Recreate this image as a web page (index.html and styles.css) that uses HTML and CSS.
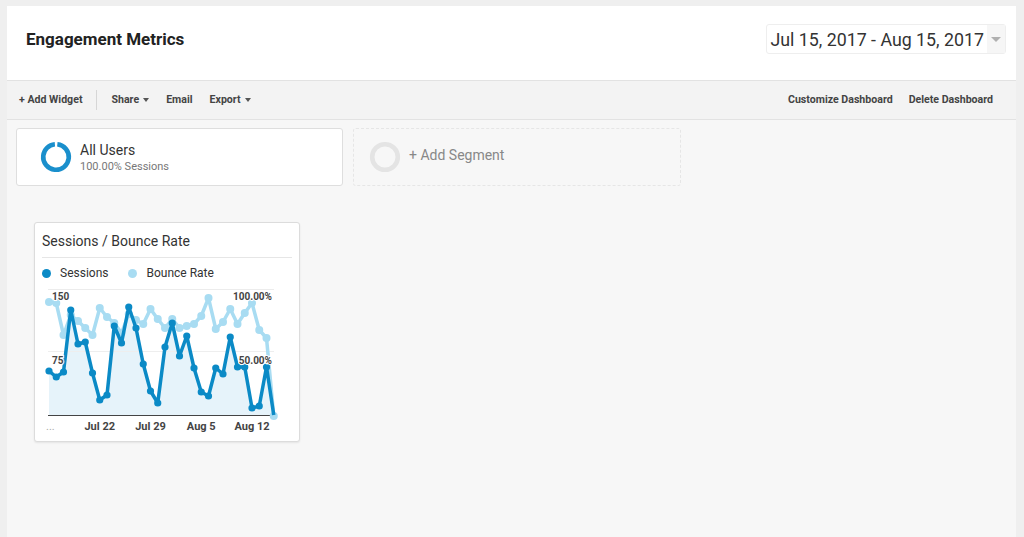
FILE: index.html
```html
<!DOCTYPE html>
<html lang="en">
<head>
    <meta charset="UTF-8">
    <title>Engagement Metrics</title>
    <link rel="stylesheet" href="styles.css">
</head>
<body>
<div class="page">
    <!-- Header -->
    <div class="header">
        <h1>Engagement Metrics</h1>
        <div class="date-range">
            <span class="date-text">Jul 15, 2017 - Aug 15, 2017</span>
            <span class="date-arrow"></span>
        </div>
    </div>

    <!-- Toolbar -->
    <div class="toolbar">
        <div class="toolbar-group">
            <span class="tool">+ Add Widget</span>
            <span class="tool-sep"></span>
            <span class="tool">Share <i class="caret"></i></span>
            <span class="tool">Email</span>
            <span class="tool">Export <i class="caret"></i></span>
        </div>
        <div class="toolbar-group right">
            <span class="tool">Customize Dashboard</span>
            <span class="tool">Delete Dashboard</span>
        </div>
    </div>

    <div class="content">
        <!-- Segmenti -->
        <div class="segments">
            <div class="segment">
                <svg class="donut" width="32" height="32" viewBox="0 0 32 32">
                    <circle cx="16" cy="16" r="12.8" fill="none" stroke="#1a8fcc" stroke-width="4.6"
                            stroke-dasharray="77.4 3" transform="rotate(-84 16 16)"/>
                </svg>
                <div class="segment-text">
                    <div class="segment-name">All Users</div>
                    <div class="segment-sub">100.00% Sessions</div>
                </div>
            </div>
            <div class="segment add">
                <svg class="donut" width="32" height="32" viewBox="0 0 32 32">
                    <circle cx="16" cy="16" r="12.8" fill="none" stroke="#e4e4e4" stroke-width="4.6"/>
                </svg>
                <div class="segment-name">+ Add Segment</div>
            </div>
        </div>

        <!-- Widget -->
        <div class="widget">
            <div class="widget-title">Sessions / Bounce Rate</div>
            <div class="legend">
                <span class="legend-item"><i class="dot sessions"></i>Sessions</span>
                <span class="legend-item"><i class="dot bounce"></i>Bounce Rate</span>
            </div>
            <svg class="chart" width="264" height="152" viewBox="35 285 264 152">
                <polygon fill="#e6f3fa" points="49,415 49,371 56.25,377 63.5,372 70.75,310 78,344 85.25,342 92.5,373 99.75,400 107,395 114.25,326 121.5,343 128.75,307 136,328 143.25,364 150.5,391 157.75,403 165,347 172.25,323 179.5,356 186.75,336 194,368 201.25,392 208.5,396 215.75,368 223,374 230.25,337 237.5,367 244.75,367 252,408 259.25,406 266.5,367 273.75,415"/>
                <line x1="48" y1="289.5" x2="274" y2="289.5" stroke="#ececec" stroke-width="1"/>
                <line x1="48" y1="351.5" x2="274" y2="351.5" stroke="#eeeeee" stroke-width="1"/>
                <line x1="48" y1="415.5" x2="274" y2="415.5" stroke="#444" stroke-width="1"/>

                <polyline fill="none" stroke="#a8dcf2" stroke-width="3.5" stroke-linejoin="round" points="49,302 56.25,303 63.5,335 70.75,315 78,321 85.25,328 92.5,335 99.75,308 107,317 114.25,323 121.5,333 128.75,314 136,320 143.25,324 150.5,309 157.75,319 165,328 172.25,319 179.5,328 186.75,326 194,324 201.25,316 208.5,298 215.75,329 223,322 230.25,309 237.5,324 244.75,313 252,303 259.25,330 266.5,338 273.75,416"/>
                <g fill="#a8dcf2" id="bounceDots"></g>

                <polyline fill="none" stroke="#0b8ac6" stroke-width="3.5" stroke-linejoin="round" points="49,371 56.25,377 63.5,372 70.75,310 78,344 85.25,342 92.5,373 99.75,400 107,395 114.25,326 121.5,343 128.75,307 136,328 143.25,364 150.5,391 157.75,403 165,347 172.25,323 179.5,356 186.75,336 194,368 201.25,392 208.5,396 215.75,368 223,374 230.25,337 237.5,367 244.75,367 252,408 259.25,406 266.5,367 273.75,415"/>
                <g fill="#0b8ac6" id="sessionDots"></g>

                <g class="axis-label">
                    <text x="52" y="300">150</text>
                    <text x="52" y="364">75</text>
                    <text x="272" y="300" text-anchor="end">100.00%</text>
                    <text x="272" y="364" text-anchor="end">50.00%</text>
                </g>
                <g class="x-label">
                    <text x="46" y="430" class="muted">...</text>
                    <text x="99.75" y="430" text-anchor="middle">Jul 22</text>
                    <text x="150.5" y="430" text-anchor="middle">Jul 29</text>
                    <text x="201.25" y="430" text-anchor="middle">Aug 5</text>
                    <text x="252" y="430" text-anchor="middle">Aug 12</text>
                </g>
            </svg>
        </div>
    </div>
</div>

<script>
    // punti del grafico
    const sessioni = [371, 377, 372, 310, 344, 342, 373, 400, 395, 326, 343, 307, 328, 364, 391, 403,
        347, 323, 356, 336, 368, 392, 396, 368, 374, 337, 367, 367, 408, 406, 367, 415];
    const rimbalzo = [302, 303, 335, 315, 321, 328, 335, 308, 317, 323, 333, 314, 320, 324, 309, 319,
        328, 319, 328, 326, 324, 316, 298, 329, 322, 309, 324, 313, 303, 330, 338, 416];

    function disegnaPunti(id, valori, raggio) {
        const g = document.getElementById(id);
        valori.forEach((y, i) => {
            const c = document.createElementNS("http://www.w3.org/2000/svg", "circle");
            c.setAttribute("cx", 49 + i * 7.25);
            c.setAttribute("cy", y);
            c.setAttribute("r", raggio);
            g.appendChild(c);
        });
    }

    disegnaPunti("bounceDots", rimbalzo, 4);
    disegnaPunti("sessionDots", sessioni.slice(0, 31), 3.6);
</script>
</body>
</html>
```

FILE: styles.css
```css
body {
    margin: 0;
    background-color: #efefef;
    font-family: Roboto, "Liberation Sans", Arial, sans-serif;
    color: #333;
}

.page {
    margin: 6px 8px 0 7px;
    min-height: 531px;
    background-color: #f7f7f7;
}

.header {
    display: flex;
    align-items: center;
    justify-content: space-between;
    box-sizing: border-box;
    height: 74px;
    padding: 0 10px 8px 19px;
    background-color: white;
}

.header h1 {
    margin: 0;
    font-size: 17px;
    font-weight: bold;
    color: #222;
}

.date-range {
    display: flex;
    align-items: stretch;
    height: 28px;
    border: 1px solid #eeeeee;
    border-radius: 3px;
}

.date-text {
    display: flex;
    align-items: center;
    padding: 0 3px 0 3px;
    font-size: 17.8px;
    color: #333;
}

.date-arrow {
    width: 18px;
    background-color: #f6f6f6;
    position: relative;
}

.date-arrow::after {
    content: "";
    position: absolute;
    left: 4px;
    top: 12px;
    border-left: 5px solid transparent;
    border-right: 5px solid transparent;
    border-top: 5px solid #b0b0b0;
}

.toolbar {
    display: flex;
    align-items: center;
    justify-content: space-between;
    height: 38px;
    padding: 0 23px 0 12px;
    background-color: #f3f3f3;
    border-top: 1px solid #e2e2e2;
    border-bottom: 1px solid #e2e2e2;
}

.toolbar-group {
    display: flex;
    align-items: center;
    gap: 17px;
}

.toolbar-group.right {
    gap: 16px;
}

.tool {
    font-size: 10.6px;
    font-weight: bold;
    color: #444;
    display: flex;
    align-items: center;
    margin-top: -1px;
}

.tool-sep {
    width: 1px;
    height: 20px;
    margin: 0 -3px;
    background-color: #d6d6d6;
}

.caret {
    display: inline-block;
    margin-left: 4px;
    border-left: 3.5px solid transparent;
    border-right: 3.5px solid transparent;
    border-top: 4px solid #555;
}

.content {
    padding: 8px 9px 0 9px;
}

.segments {
    display: flex;
    gap: 10px;
}

.segment {
    display: flex;
    align-items: center;
    box-sizing: border-box;
    width: 327px;
    height: 58px;
    padding-left: 23px;
    background-color: white;
    border: 1px solid #dedede;
    border-radius: 3px;
}

.segment.add {
    width: 328px;
    padding-left: 15px;
    background-color: #f7f7f7;
    border: 1px dashed #e6e6e6;
}

.donut {
    display: block;
    margin-right: 8px;
}

.segment-name {
    font-size: 14px;
    color: #333;
}

.segment.add .segment-name {
    color: #888;
    margin-top: -4px;
}

.segment-sub {
    font-size: 11px;
    color: #777;
    margin-top: 2px;
}

.widget {
    box-sizing: border-box;
    width: 266px;
    height: 220px;
    margin: 36px 0 0 18px;
    background-color: white;
    border: 1px solid #dcdcdc;
    border-radius: 3px;
    box-shadow: 0 1px 2px rgba(0, 0, 0, 0.08);
}

.widget-title {
    margin: 0 7px;
    padding: 10px 0 8px 0;
    font-size: 14px;
    color: #333;
    border-bottom: 1px solid #e6e6e6;
}

.legend {
    display: flex;
    gap: 20px;
    padding: 8px 0 0 7px;
    height: 19px;
    font-size: 12px;
    color: #333;
}

.legend-item {
    display: flex;
    align-items: center;
    height: 14px;
}

.dot {
    display: inline-block;
    width: 9px;
    height: 9px;
    border-radius: 50%;
    margin-right: 9px;
}

.dot.sessions {
    background-color: #0b8ac6;
}

.dot.bounce {
    background-color: #a8dcf2;
}

.chart {
    display: block;
}

.axis-label text {
    font-size: 10px;
    font-weight: bold;
    fill: #444;
    stroke: white;
    stroke-width: 2px;
    paint-order: stroke;
}

.x-label text {
    font-size: 11px;
    font-weight: bold;
    fill: #444;
}

.x-label text.muted {
    fill: #aaa;
    font-weight: normal;
}
```
